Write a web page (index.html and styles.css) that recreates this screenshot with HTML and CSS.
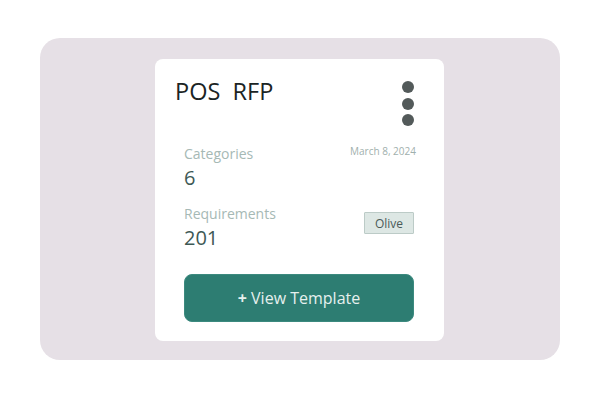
FILE: index.html
```html
<!DOCTYPE html>
<html>
<head>
<meta charset="utf-8">
<link rel="stylesheet" href="styles.css">
</head>
<body>
<div class="panel">
  <div class="card">
    <div class="head">
      <h1 class="title">POS&nbsp; RFP</h1>
      <div class="dots">
        <span class="dot"></span>
        <span class="dot"></span>
        <span class="dot"></span>
      </div>
    </div>
    <div class="row">
      <div class="stat">
        <div class="label">Categories</div>
        <div class="value">6</div>
      </div>
      <div class="date">March 8, 2024</div>
    </div>
    <div class="row row2">
      <div class="stat">
        <div class="label">Requirements</div>
        <div class="value">201</div>
      </div>
      <div class="badge">Olive</div>
    </div>
    <button class="btn"><span class="plus">+</span> View Template</button>
  </div>
</div>
</body>
</html>
```
FILE: styles.css
```css
* { box-sizing: border-box; }
html, body { margin: 0; padding: 0; background: #ffffff; }
body {
  width: 600px;
  height: 400px;
  font-family: "Open Sans", "Noto Sans", sans-serif;
  padding: 38px 40px 40px 40px;
}
.panel {
  width: 520px;
  height: 322px;
  background: #e6e0e6;
  border-radius: 20px;
  display: flex;
  justify-content: center;
  padding-top: 21px;
  padding-right: 1px;
}
.card {
  width: 289px;
  height: 282px;
  background: #ffffff;
  border-radius: 8px;
  padding: 16px 30px 0 29px;
  display: flex;
  flex-direction: column;
}
.head {
  display: flex;
  justify-content: space-between;
  align-items: flex-start;
}
.title {
  margin: 0 0 0 -9px;
  font-size: 23.5px;
  font-weight: 400;
  color: #1b2424;
  line-height: 32px;
}
.dots {
  display: flex;
  flex-direction: column;
  gap: 4.5px;
  padding-top: 6px;
}
.dot {
  display: block;
  width: 12px;
  height: 12px;
  border-radius: 50%;
  background: #535a5a;
}
.row {
  display: flex;
  justify-content: space-between;
  align-items: flex-start;
  margin-top: 18px;
}
.row2 { margin-top: 13px; align-items: center; }
.label {
  font-size: 14px;
  color: #a6b9b5;
  line-height: 20px;
}
.value {
  font-size: 20px;
  color: #3e5955;
  line-height: 27px;
}
.date {
  font-size: 10px;
  color: #9fb0ad;
  padding-top: 0;
  margin-right: -2px;
}
.badge {
  font-size: 12px;
  color: #4a5a58;
  background: #dde7e4;
  border: 1px solid #bccbc7;
  padding: 2px 10px;
  height: 22px;
  border-radius: 1px;
  margin-top: -10px;
}
.btn {
  margin-top: 23px;
  height: 48px;
  width: 230px;
  border: 1px solid #3c8a7f;
  border-radius: 8px;
  background: #2d7d72;
  color: #e6f0ee;
  font-family: "Open Sans", "Noto Sans", sans-serif;
  font-size: 16px;
  padding: 0;
}
.plus { font-weight: 700; }
```
